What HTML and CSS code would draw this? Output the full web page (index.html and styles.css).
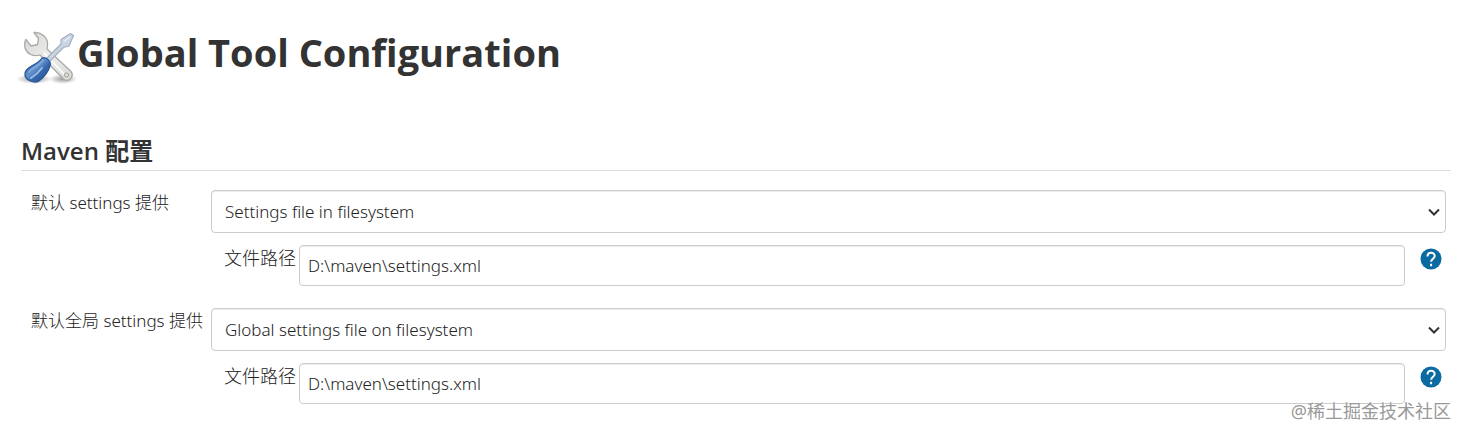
FILE: index.html
```html
<!DOCTYPE html>
<html lang="zh-CN">
<head>
    <meta charset="UTF-8">
    <meta name="viewport" content="width=device-width, initial-scale=1.0">
    <title>Global Tool Configuration</title>
    <link rel="stylesheet" href="styles.css">
</head>
<body>
    <main class="page">
        <header class="page-header">
            <svg class="tools-icon" viewBox="0 0 60 60" aria-hidden="true">
                <defs>
                    <linearGradient id="steel" x1="0" y1="0" x2="1" y2="1">
                        <stop offset="0" stop-color="#d4d5d3"/>
                        <stop offset="0.5" stop-color="#eeeeed"/>
                        <stop offset="1" stop-color="#d8d9d6"/>
                    </linearGradient>
                    <linearGradient id="handle" x1="0" y1="0" x2="1" y2="1">
                        <stop offset="0" stop-color="#3f73b8"/>
                        <stop offset="0.45" stop-color="#5f8fcb"/>
                        <stop offset="0.6" stop-color="#3568ac"/>
                        <stop offset="1" stop-color="#24518f"/>
                    </linearGradient>
                    <radialGradient id="shadow">
                        <stop offset="0" stop-color="#000" stop-opacity="0.4"/>
                        <stop offset="1" stop-color="#000" stop-opacity="0"/>
                    </radialGradient>
                </defs>
                <ellipse cx="17" cy="51" rx="18" ry="5" fill="url(#shadow)"/>
                <ellipse cx="46" cy="51" rx="14" ry="5" fill="url(#shadow)"/>
                <!-- wrench -->
                <path d="M17 4.500C24 4 30 9 30.500 15C30.700 17 30.500 19 30 21L53.500 43C58 48 52 55 46.500 51L23 27C16 29 10 26 8 20C7.500 17 7.500 13.500 9 11.500L14 18L20.500 16.500L21.500 10.500Z" fill="url(#steel)" stroke="#a9aaa6" stroke-width="1.300" stroke-linejoin="round"/>
                <path d="M27 25L47 46" stroke="#fff" stroke-width="1.500" fill="none"/>
                <circle cx="49.500" cy="47" r="2" fill="#e8e8e6" stroke="#989a95"/>
                <!-- screwdriver -->
                <path d="M28 32L44 16L44 11.500L53.500 5.500L56.500 7.500L52 18L46.500 19.500L31.500 34.500Z" fill="#cad5e2" stroke="#a3b0c1" stroke-width="1.200" stroke-linejoin="round"/>
                <path d="M47 13.500L53 9" stroke="#e6edf5" stroke-width="1.500"/>
                <path d="M25 30C28 28.500 35 33 33 38C31 45 27 49 22 53C17 56 7 52 8 45C9.500 38 21 37 25 30Z" fill="url(#handle)" stroke="#2b5797" stroke-width="1.200"/>
                <path d="M12 44C15 40 22 38 26 32" stroke="#7fa8da" stroke-width="2" fill="none" stroke-linecap="round"/>
                <path d="M14 50C19 47 22 44 25 40" stroke="#9abce6" stroke-width="2" fill="none" stroke-linecap="round"/>
            </svg>
            <h1>Global Tool Configuration</h1>
        </header>

        <form class="config">
            <h2>Maven 配置</h2>

            <div class="setting">
                <label class="setting-name" for="settings">默认 settings 提供</label>
                <div class="setting-body">
                    <div class="select-wrap">
                        <select id="settings">
                            <option>Settings file in filesystem</option>
                        </select>
                        <svg class="chevron" viewBox="0 0 12 8" aria-hidden="true"><path d="M1 1.500L6 6.500L11 1.500"/></svg>
                    </div>
                    <div class="path-row">
                        <label for="settingsPath">文件路径</label>
                        <input type="text" id="settingsPath" value="D:\maven\settings.xml">
                        <button type="button" class="help" aria-label="帮助">
                            <svg viewBox="0 0 22 22" aria-hidden="true">
                                <circle cx="11" cy="11" r="10.500"/>
                                <path d="M7.500 8.500C7.500 3.500 14.700 3.600 14.700 8.100C14.700 10.800 11.100 10.800 11.100 13.800M11.100 15.800V18.200"/>
                            </svg>
                        </button>
                    </div>
                </div>
            </div>

            <div class="setting">
                <label class="setting-name" for="globalSettings">默认全局 settings 提供</label>
                <div class="setting-body">
                    <div class="select-wrap">
                        <select id="globalSettings">
                            <option>Global settings file on filesystem</option>
                        </select>
                        <svg class="chevron" viewBox="0 0 12 8" aria-hidden="true"><path d="M1 1.500L6 6.500L11 1.500"/></svg>
                    </div>
                    <div class="path-row">
                        <label for="globalSettingsPath">文件路径</label>
                        <input type="text" id="globalSettingsPath" value="D:\maven\settings.xml">
                        <button type="button" class="help" aria-label="帮助">
                            <svg viewBox="0 0 22 22" aria-hidden="true">
                                <circle cx="11" cy="11" r="10.500"/>
                                <path d="M7.500 8.500C7.500 3.500 14.700 3.600 14.700 8.100C14.700 10.800 11.100 10.800 11.100 13.800M11.100 15.800V18.200"/>
                            </svg>
                        </button>
                    </div>
                </div>
            </div>
        </form>
        <span class="watermark">@稀土掘金技术社区</span>
    </main>
</body>
</html>
```
FILE: styles.css
```css
* {
    margin: 0;
    padding: 0;
    box-sizing: border-box;
}

body {
    background: #fff;
    color: #222;
    font-family: "Noto Sans", "Noto Sans CJK SC", sans-serif;
    font-size: 17px;
    font-weight: 300;
    line-height: 26px;
}

.page {
    position: relative;
    padding: 28px 16px 24px 21px;
}

.page-header {
    display: flex;
    align-items: flex-start;
    margin-left: -4px;
}

.tools-icon {
    width: 60px;
    height: 60px;
}

h1,
h2 {
    color: #333;
    font-family: "Open Sans", "Noto Sans CJK SC", sans-serif;
}

h1 {
    font-size: 38px;
    line-height: 48px;
    font-weight: 700;
}

h2 {
    margin: 46px 0 19px;
    padding-bottom: 2px;
    border-bottom: 1px solid #ddd;
    font-size: 24px;
    line-height: 34px;
    font-weight: 600;
}

.setting {
    display: flex;
    align-items: flex-start;
    padding: 0 5px 0 10px;
}

.setting + .setting {
    margin-top: 22px;
}

.setting-name {
    flex: 0 0 180px;
    white-space: nowrap;
}

.setting-body {
    flex: 1;
}

.select-wrap {
    position: relative;
}

select,
input {
    width: 100%;
    border: 1px solid #ccc;
    border-radius: 4px;
    background: #fff;
    box-shadow: inset 0 1px 1px rgba(0, 0, 0, 0.08);
    color: #222;
    font: inherit;
}

select {
    display: block;
    height: 43px;
    padding: 0 32px 0 13px;
    appearance: none;
}

/* sits over the right end of the select */
.chevron {
    position: absolute;
    top: 18px;
    right: 6px;
    width: 12px;
    height: 8px;
    fill: none;
    stroke: #333;
    stroke-width: 2;
    pointer-events: none;
}

.path-row {
    display: flex;
    align-items: flex-start;
    margin-top: 12px;
    padding: 0 4px 0 13px;
}

.path-row label {
    flex: 0 0 75px;
    font-size: 18px;
    white-space: nowrap;
}

.path-row input {
    flex: 1;
    height: 41px;
    padding: 0 8px;
}

.help {
    width: 22px;
    height: 22px;
    margin: 3px 0 0 15px;
    border: none;
    background: none;
    cursor: pointer;
}

.help svg {
    display: block;
}

.help circle {
    fill: #0b6aa2;
}

.help path {
    fill: none;
    stroke: #fff;
    stroke-width: 2;
}

.watermark {
    position: absolute;
    right: 16px;
    bottom: 4px;
    color: #999;
    font-size: 18px;
    font-weight: 400;
    text-shadow: 1px 1px 1px #fff;
    pointer-events: none;
}
```
